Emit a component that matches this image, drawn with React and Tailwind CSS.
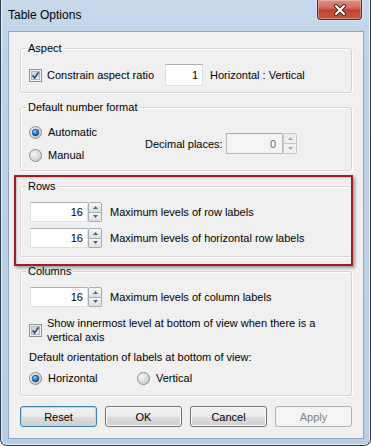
import React from "react";

function Check() {
  return (
    <svg width="13" height="13" viewBox="0 0 13 13" className="shrink-0">
      <defs>
        <linearGradient id="cbg" x1="0" y1="0" x2="1" y2="1">
          <stop offset="0" stopColor="#c9ced6" />
          <stop offset="1" stopColor="#f7f7f7" />
        </linearGradient>
      </defs>
      <rect x="0.5" y="0.5" width="12" height="12" fill="#f4f4f4" stroke="#8e8f8f" />
      <rect x="2.5" y="2.5" width="8" height="8" fill="url(#cbg)" stroke="#b0b4ba" />
      <path d="M3.6 6.4 L5.6 9 L9.6 3.3" fill="none" stroke="#3d4f94" strokeWidth="1.9" />
    </svg>
  );
}

function Radio({ checked }) {
  return (
    <svg width="13" height="13" viewBox="0 0 13 13" className="shrink-0">
      <defs>
        <radialGradient id="rbg" cx="0.35" cy="0.35" r="0.8">
          <stop offset="0" stopColor="#f6f6f6" />
          <stop offset="1" stopColor="#c2c6cb" />
        </radialGradient>
        <radialGradient id="rdot" cx="0.4" cy="0.35" r="0.7">
          <stop offset="0" stopColor="#9fdaf8" />
          <stop offset="0.5" stopColor="#2c80c2" />
          <stop offset="1" stopColor="#0d4478" />
        </radialGradient>
      </defs>
      <circle cx="6.5" cy="6.5" r="6" fill="url(#rbg)" stroke="#8a8c8e" />
      {checked && <circle cx="6.5" cy="6.5" r="3.4" fill="url(#rdot)" stroke="#1a4670" strokeWidth="0.6" />}
    </svg>
  );
}

function Spin({ disabled }) {
  const arrow = disabled ? "#a8a8a8" : "#4c607a";
  const part = disabled
    ? "flex-1 border border-[#c6c8ca] bg-[#f0f0f0] flex items-center justify-center"
    : "flex-1 border border-[#a6abb2] bg-[linear-gradient(180deg,#f7f7f7,#dedfe1)] flex items-center justify-center";
  return (
    <div className="flex flex-col w-[14px] self-stretch">
      <div className={part + " rounded-t-[2px]"}>
        <svg width="5" height="3" viewBox="0 0 5 3"><path d="M0 3 L2.5 0 L5 3Z" fill={arrow} /></svg>
      </div>
      <div className={part + " rounded-b-[2px] border-t-0"}>
        <svg width="5" height="3" viewBox="0 0 5 3"><path d="M0 0 L2.5 3 L5 0Z" fill={arrow} /></svg>
      </div>
    </div>
  );
}

function SpinField({ value, label }) {
  return (
    <div className="flex items-center h-[20px]">
      <div className="flex h-[20px] ml-[1px]">
        <div className="w-[58px] h-[20px] bg-white border border-[#dbdfe6] border-t-[#abadb3] flex items-center justify-end pr-[4px]">
          {value}
        </div>
        <Spin />
      </div>
      <span className="ml-[8px] whitespace-nowrap">{label}</span>
    </div>
  );
}

function Group({ title, className, boxClass, children }) {
  return (
    <div className={"flex flex-col " + className}>
      <span className="self-start ml-[6px] px-[2px] leading-[15px] bg-[#f0f0f0] relative z-10 -mb-[8px]">
        {title}
      </span>
      <div
        className={
          "border border-[#d5d5d5] rounded-[3px] shadow-[inset_1px_1px_0_#ffffff,1px_1px_0_#ffffff] pl-[8px] pr-[8px] flex flex-col " +
          boxClass
        }
      >
        {children}
      </div>
    </div>
  );
}

const btnGrad =
  "bg-[linear-gradient(180deg,#f2f2f2_0%,#ebebeb_50%,#dddddd_51%,#cfcfcf_100%)]";

export default function App() {
  return (
    <div className="w-[371px] h-[446px] flex flex-col border-l border-r border-b border-[#34404e] rounded-b-[7px] bg-[linear-gradient(180deg,#c9d9eb_0%,#bfd3e9_10%,#b8cde6_100%)] shadow-[inset_1px_0_0_rgba(255,255,255,0.55),inset_-1px_0_0_rgba(255,255,255,0.55),inset_0_-1px_0_rgba(255,255,255,0.55)] font-['Liberation_Sans',Arial,sans-serif] text-black overflow-hidden">
      {/* Title bar */}
      <div className="h-[31px] flex items-start justify-between pl-[7px] pr-[8px] shrink-0">
        <span className="text-[12px] leading-[16px] mt-[7px]">Table Options</span>
        <div className="w-[45px] h-[20px] rounded-b-[4px] border border-t-0 border-[#5e2720] bg-[linear-gradient(180deg,#dc8e82_0%,#cf6d5e_40%,#bd4530_55%,#c55a40_100%)] shadow-[inset_0_0_0_1px_rgba(255,255,255,0.3),0_0_3px_rgba(255,255,255,0.7)] flex items-center justify-center">
          <svg width="14" height="12" viewBox="0 0 14 12">
            <path d="M3 2 L11 10 M11 2 L3 10" stroke="#4a1a14" strokeWidth="4" strokeLinecap="round" />
            <path d="M3 2 L11 10 M11 2 L3 10" stroke="#ffffff" strokeWidth="2.2" strokeLinecap="round" />
          </svg>
        </div>
      </div>

      {/* Client area */}
      <div className="flex-1 ml-[7px] mr-[6px] mb-[6px] border border-[#92a4ba] bg-[#f0f0f0] px-[11px] pt-[9px] flex flex-col text-[11px] leading-[14px]">
        <Group title="Aspect" boxClass="pt-[15px] pb-[6px]">
          <div className="flex items-center h-[22px]">
            <div className="w-[136px] flex items-center gap-[5px]">
              <Check />
              <span className="whitespace-nowrap">Constrain aspect ratio</span>
            </div>
            <div className="w-[38px] h-[22px] bg-white border border-[#dbdfe6] border-t-[#abadb3] flex items-center justify-end pr-[4px]">
              1
            </div>
            <span className="ml-[7px] whitespace-nowrap">Horizontal : Vertical</span>
          </div>
        </Group>

        <Group title="Default number format" className="mt-[7px]" boxClass="pt-[16px] pb-[7px]">
          <div className="flex items-center">
            <div className="w-[116px] flex flex-col gap-[7px]">
              <div className="flex items-center gap-[6px] h-[16px]">
                <Radio checked />
                <span>Automatic</span>
              </div>
              <div className="flex items-center gap-[6px] h-[16px]">
                <Radio />
                <span>Manual</span>
              </div>
            </div>
            <span className="w-[81px] whitespace-nowrap">Decimal places:</span>
            <div className="flex h-[21px]">
              <div className="w-[57px] h-[21px] bg-[#f4f4f4] border border-[#b7babd] border-t-[#a5a8ab] flex items-center justify-end pr-[6px] text-[#6d6d6d]">
                0
              </div>
              <Spin disabled />
            </div>
          </div>
        </Group>

        <div className="relative mt-[8px]">
          <Group title="Rows" boxClass="pt-[15px] pb-[8px] gap-[6px]">
            <SpinField value="16" label="Maximum levels of row labels" />
            <SpinField value="16" label="Maximum levels of horizontal row labels" />
          </Group>
          <div className="absolute -top-[4px] -left-[6px] -right-[1px] -bottom-[9px] border-2 border-[#a11d22] shadow-[2px_2px_3px_rgba(0,0,0,0.35),inset_1px_1px_2px_rgba(0,0,0,0.2)] pointer-events-none z-20" />
        </div>

        <Group title="Columns" className="mt-[7px]" boxClass="pt-[15px] pb-[9px]">
          <SpinField value="16" label="Maximum levels of column labels" />
          <div className="flex items-center gap-[5px] mt-[9px]">
            <Check />
            <span className="whitespace-nowrap">
              Show innermost level at bottom of view when there is a
              <br />
              vertical axis
            </span>
          </div>
          <div className="mt-[6px] whitespace-nowrap">Default orientation of labels at bottom of view:</div>
          <div className="flex items-center mt-[6px] h-[16px]">
            <div className="w-[108px] flex items-center gap-[6px]">
              <Radio checked />
              <span>Horizontal</span>
            </div>
            <div className="flex items-center gap-[6px]">
              <Radio />
              <span>Vertical</span>
            </div>
          </div>
        </Group>

        <div className="grid grid-cols-4 gap-[8px] mt-[10px]">
          <div className={"h-[21px] rounded-[3px] border border-[#3c7fb1] shadow-[inset_0_0_0_1px_#a9dcf6] flex items-center justify-center " + btnGrad}>
            Reset
          </div>
          <div className={"h-[21px] rounded-[3px] border border-[#707070] shadow-[inset_0_0_0_1px_#fcfcfc] flex items-center justify-center " + btnGrad}>
            OK
          </div>
          <div className={"h-[21px] rounded-[3px] border border-[#707070] shadow-[inset_0_0_0_1px_#fcfcfc] flex items-center justify-center " + btnGrad}>
            Cancel
          </div>
          <div className="h-[21px] rounded-[3px] border border-[#adb2b5] bg-[#f4f4f4] text-[#838383] flex items-center justify-center">
            Apply
          </div>
        </div>
      </div>
    </div>
  );
}
